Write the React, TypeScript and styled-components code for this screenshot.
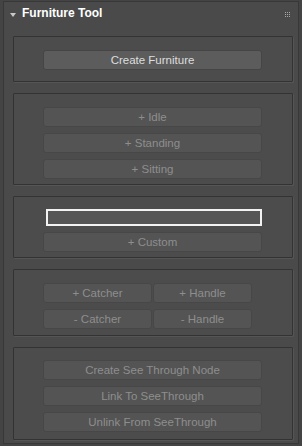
import React from 'react';
import styled, { createGlobalStyle } from "styled-components";

const GlobalStyle = createGlobalStyle`
  html, body {
    margin: 0;
    padding: 0;
    background: #444444;
  }
  body {
    font-family: "Liberation Sans", Arial, sans-serif;
  }
`

const Page = styled.div`
  padding: 1px 3px 0 3px;
  width: 302px;
  height: 446px;
  box-sizing: border-box;
`

const Rollout = styled.div`
  width: 296px;
  height: 443px;
  box-sizing: border-box;
  border: 1px solid #383838;
  background: #4a4a4a;
  display: flex;
  flex-direction: column;
  gap: 11px;
`

const Header = styled.div`
  height: 23px;
  display: flex;
  align-items: flex-start;
  padding: 4px 4px 0 6px;
  box-sizing: border-box;
`

const Arrow = styled.div`
  width: 0;
  height: 0;
  margin: 7px 6px 0 0;
  border-left: 3px solid transparent;
  border-right: 3px solid transparent;
  border-top: 4px solid #c9c9c9;
`

const Title = styled.div`
  font-weight: bold;
  font-size: 12px;
  line-height: 14px;
  color: #ffffff;
  flex: 1;
`

const Grip = styled.svg`
  margin-top: 6px;
  margin-right: 4px;
`

const Group = styled.div<{ $pt: number; $pb: number; $gap?: number }>`
  margin-left: 9px;
  width: 280px;
  box-sizing: border-box;
  border: 1px solid #333333;
  box-shadow: 1px 1px 0 #555555;
  border-radius: 1px;
  background: #4c4c4c;
  padding: ${p => p.$pt}px 0 ${p => p.$pb}px 29px;
  display: flex;
  flex-direction: column;
  align-items: flex-start;
  gap: ${p => p.$gap ?? 6}px;
`

const Button = styled.div<{ $active?: boolean; $w?: number }>`
  width: ${p => p.$w ?? 219}px;
  height: 20px;
  box-sizing: border-box;
  border: 1px solid ${p => (p.$active ? "#454545" : "#474747")};
  border-radius: 3px;
  background: ${p => (p.$active ? "#5c5c5c" : "#545454")};
  color: ${p => (p.$active ? "#dedede" : "#8e8e8e")};
  font-size: 11.5px;
  line-height: 18px;
  text-align: center;
  white-space: nowrap;
`

const TextField = styled.div`
  width: 216px;
  height: 17px;
  box-sizing: border-box;
  margin-left: 3px;
  border: 2px solid #f2f2f2;
  background: #555555;
`

const Row = styled.div`
  display: flex;
  gap: 1px;
`

const GripIcon = () => (
  <Grip width="5" height="5" viewBox="0 0 5 5">
    {[0, 2, 4].map(y =>
      [0, 2, 4].map(x => <rect key={`${x}-${y}`} x={x} y={y} width="1" height="1" fill="#a8a8a8" />)
    )}
  </Grip>
)

export default function App() {
  return (
    <Page>
      <GlobalStyle />
      <Rollout>
        <Header>
          <Arrow />
          <Title>Furniture Tool</Title>
          <GripIcon />
        </Header>

        <Group $pt={13} $pb={11}>
          <Button $active>Create Furniture</Button>
        </Group>

        <Group $pt={13} $pb={5}>
          <Button>+ Idle</Button>
          <Button>+ Standing</Button>
          <Button>+ Sitting</Button>
        </Group>

        <Group $pt={12} $pb={5}>
          <TextField />
          <Button>+ Custom</Button>
        </Group>

        <Group $pt={13} $pb={6}>
          <Row>
            <Button $w={109}>+ Catcher</Button>
            <Button $w={99}>+ Handle</Button>
          </Row>
          <Row>
            <Button $w={109}>- Catcher</Button>
            <Button $w={99}>- Handle</Button>
          </Row>
        </Group>

        <Group $pt={12} $pb={7}>
          <Button>Create See Through Node</Button>
          <Button>Link To SeeThrough</Button>
          <Button>Unlink From SeeThrough</Button>
        </Group>
      </Rollout>
    </Page>
  );
}
